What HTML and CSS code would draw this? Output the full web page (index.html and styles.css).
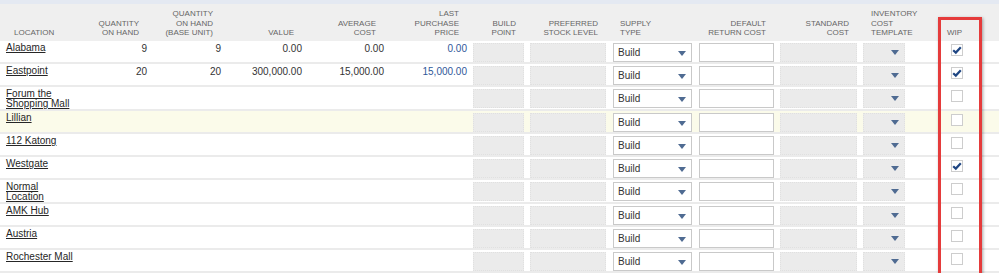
FILE: index.html
```html
<!DOCTYPE html>
<html>
<head>
    <title>Locations</title>
    <link rel="stylesheet" href="styles.css">
</head>
<body>
    <div class="strip"></div>
    <div class="sheet">
        <table class="grid">
            <colgroup>
                <col class="w-loc"><col class="w-qty"><col class="w-base"><col class="w-value">
                <col class="w-avg"><col class="w-last"><col class="w-build"><col class="w-pref">
                <col class="w-supply"><col class="w-ret"><col class="w-std"><col class="w-tmpl">
                <col class="w-wip"><col class="w-end">
            </colgroup>
            <thead>
                <tr>
                    <th class="first">LOCATION</th>
                    <th class="num">QUANTITY<br>ON HAND</th>
                    <th class="num">QUANTITY<br>ON HAND<br>(BASE UNIT)</th>
                    <th class="num">VALUE</th>
                    <th class="num">AVERAGE<br>COST</th>
                    <th class="num">LAST<br>PURCHASE<br>PRICE</th>
                    <th class="num">BUILD<br>POINT</th>
                    <th class="num">PREFERRED<br>STOCK LEVEL</th>
                    <th>SUPPLY<br>TYPE</th>
                    <th class="num">DEFAULT<br>RETURN COST</th>
                    <th class="num">STANDARD<br>COST</th>
                    <th>INVENTORY<br>COST<br>TEMPLATE</th>
                    <th class="wip">WIP</th>
                    <th></th>
                </tr>
            </thead>
            <tbody>
                <tr>
                    <td class="loc"><a href="#">Alabama</a></td>
                    <td class="num">9</td>
                    <td class="num">9</td>
                    <td class="num">0.00</td>
                    <td class="num">0.00</td>
                    <td class="num price">0.00</td>
                    <td><div class="locked"></div></td>
                    <td><div class="locked"></div></td>
                    <td><div class="select">Build<i class="arrow"></i></div></td>
                    <td><input class="field" type="text"></td>
                    <td><div class="locked"></div></td>
                    <td><div class="locked tmpl"><i class="arrow"></i></div></td>
                    <td class="wip"><span class="check on"><svg width="10" height="10" viewBox="0 0 10 10"><path d="M1.2 5.2 L3.8 7.6 L8.8 2.2" fill="none" stroke="#1f4683" stroke-width="2.2"/></svg></span></td>
                    <td></td>
                </tr>
                <tr>
                    <td class="loc"><a href="#">Eastpoint</a></td>
                    <td class="num">20</td>
                    <td class="num">20</td>
                    <td class="num">300,000.00</td>
                    <td class="num">15,000.00</td>
                    <td class="num price">15,000.00</td>
                    <td><div class="locked"></div></td>
                    <td><div class="locked"></div></td>
                    <td><div class="select">Build<i class="arrow"></i></div></td>
                    <td><input class="field" type="text"></td>
                    <td><div class="locked"></div></td>
                    <td><div class="locked tmpl"><i class="arrow"></i></div></td>
                    <td class="wip"><span class="check on"><svg width="10" height="10" viewBox="0 0 10 10"><path d="M1.2 5.2 L3.8 7.6 L8.8 2.2" fill="none" stroke="#1f4683" stroke-width="2.2"/></svg></span></td>
                    <td></td>
                </tr>
                <tr>
                    <td class="loc"><a href="#">Forum the Shopping Mall</a></td>
                    <td></td><td></td><td></td><td></td><td></td>
                    <td><div class="locked"></div></td>
                    <td><div class="locked"></div></td>
                    <td><div class="select">Build<i class="arrow"></i></div></td>
                    <td><input class="field" type="text"></td>
                    <td><div class="locked"></div></td>
                    <td><div class="locked tmpl"><i class="arrow"></i></div></td>
                    <td class="wip"><span class="check"></span></td>
                    <td></td>
                </tr>
                <tr class="hover">
                    <td class="loc"><a href="#">Lillian</a></td>
                    <td></td><td></td><td></td><td></td><td></td>
                    <td><div class="locked"></div></td>
                    <td><div class="locked"></div></td>
                    <td><div class="select">Build<i class="arrow"></i></div></td>
                    <td><input class="field" type="text"></td>
                    <td><div class="locked"></div></td>
                    <td><div class="locked tmpl"><i class="arrow"></i></div></td>
                    <td class="wip"><span class="check"></span></td>
                    <td></td>
                </tr>
                <tr>
                    <td class="loc"><a href="#">112 Katong</a></td>
                    <td></td><td></td><td></td><td></td><td></td>
                    <td><div class="locked"></div></td>
                    <td><div class="locked"></div></td>
                    <td><div class="select">Build<i class="arrow"></i></div></td>
                    <td><input class="field" type="text"></td>
                    <td><div class="locked"></div></td>
                    <td><div class="locked tmpl"><i class="arrow"></i></div></td>
                    <td class="wip"><span class="check"></span></td>
                    <td></td>
                </tr>
                <tr>
                    <td class="loc"><a href="#">Westgate</a></td>
                    <td></td><td></td><td></td><td></td><td></td>
                    <td><div class="locked"></div></td>
                    <td><div class="locked"></div></td>
                    <td><div class="select">Build<i class="arrow"></i></div></td>
                    <td><input class="field" type="text"></td>
                    <td><div class="locked"></div></td>
                    <td><div class="locked tmpl"><i class="arrow"></i></div></td>
                    <td class="wip"><span class="check on"><svg width="10" height="10" viewBox="0 0 10 10"><path d="M1.2 5.2 L3.8 7.6 L8.8 2.2" fill="none" stroke="#1f4683" stroke-width="2.2"/></svg></span></td>
                    <td></td>
                </tr>
                <tr>
                    <td class="loc"><a href="#">Normal Location</a></td>
                    <td></td><td></td><td></td><td></td><td></td>
                    <td><div class="locked"></div></td>
                    <td><div class="locked"></div></td>
                    <td><div class="select">Build<i class="arrow"></i></div></td>
                    <td><input class="field" type="text"></td>
                    <td><div class="locked"></div></td>
                    <td><div class="locked tmpl"><i class="arrow"></i></div></td>
                    <td class="wip"><span class="check"></span></td>
                    <td></td>
                </tr>
                <tr>
                    <td class="loc"><a href="#">AMK Hub</a></td>
                    <td></td><td></td><td></td><td></td><td></td>
                    <td><div class="locked"></div></td>
                    <td><div class="locked"></div></td>
                    <td><div class="select">Build<i class="arrow"></i></div></td>
                    <td><input class="field" type="text"></td>
                    <td><div class="locked"></div></td>
                    <td><div class="locked tmpl"><i class="arrow"></i></div></td>
                    <td class="wip"><span class="check"></span></td>
                    <td></td>
                </tr>
                <tr>
                    <td class="loc"><a href="#">Austria</a></td>
                    <td></td><td></td><td></td><td></td><td></td>
                    <td><div class="locked"></div></td>
                    <td><div class="locked"></div></td>
                    <td><div class="select">Build<i class="arrow"></i></div></td>
                    <td><input class="field" type="text"></td>
                    <td><div class="locked"></div></td>
                    <td><div class="locked tmpl"><i class="arrow"></i></div></td>
                    <td class="wip"><span class="check"></span></td>
                    <td></td>
                </tr>
                <tr>
                    <td class="loc"><a href="#">Rochester Mall</a></td>
                    <td></td><td></td><td></td><td></td><td></td>
                    <td><div class="locked"></div></td>
                    <td><div class="locked"></div></td>
                    <td><div class="select">Build<i class="arrow"></i></div></td>
                    <td><input class="field" type="text"></td>
                    <td><div class="locked"></div></td>
                    <td><div class="locked tmpl"><i class="arrow"></i></div></td>
                    <td class="wip"><span class="check"></span></td>
                    <td></td>
                </tr>
            </tbody>
        </table>
        <div class="callout"></div>
    </div>
</body>
</html>
```

FILE: styles.css
```css
*
{
	margin: 0;
	padding: 0;
}
body
{
	background: #fff;
	font-family: "Liberation Sans", Arial, sans-serif;
	color: #333;
	overflow: hidden;
}
.strip
{
	height: 4px;
	background: #e4e9f2;
}
.sheet
{
	position: relative;
}

/* column widths */
.w-loc { width: 80px; }
.w-qty { width: 70px; }
.w-base { width: 74px; }
.w-value { width: 81px; }
.w-avg { width: 82px; }
.w-last { width: 83px; }
.w-build { width: 57px; }
.w-pref { width: 82px; }
.w-supply { width: 87px; }
.w-ret { width: 81px; }
.w-std { width: 83px; }
.w-tmpl { width: 79px; }
.w-wip { width: 43px; }
.w-end { width: 17px; }

.grid
{
	width: 999px;
	table-layout: fixed;
	border-collapse: collapse;
}
.grid th
{
	height: 33px;
	background: #efefef;
	color: #666;
	font-size: 8px;
	font-weight: normal;
	line-height: 9.2px;
	text-align: left;
	vertical-align: bottom;
	white-space: nowrap;
	padding: 0 11px 4px 11px;
}
.grid th.first
{
	padding-left: 14px;
}
.grid th.num
{
	text-align: right;
}
.grid th.wip
{
	padding-left: 8px;
}
.grid td
{
	font-size: 10px;
	line-height: 10px;
	vertical-align: top;
	padding: 2px 3px 0 3px;
	border-bottom: 2px solid #ebebeb;
	height: 19px;
}
.grid td.loc
{
	padding-left: 6px;
	padding-top: 2px;
	height: 19px;
}
.grid td.num
{
	text-align: right;
	padding-top: 3px;
	height: 18px;
}
.grid td.price
{
	color: #2f5899;
}
.grid tr.hover td
{
	background: #fbfbea;
}
.loc a
{
	color: #262626;
	text-decoration: underline;
}

.locked
{
	height: 19px;
	box-sizing: border-box;
	background: #ebebeb;
	border: 1px dotted #e0e0e0;
	position: relative;
}
.locked.tmpl
{
	width: 42px;
}
.select
{
	position: relative;
	height: 19px;
	box-sizing: border-box;
	margin: 0 1px;
	padding: 4px 0 0 4px;
	background: #fff;
	border: 1px solid #c9c9c9;
	color: #333;
	font-size: 10px;
	line-height: 10px;
}
.arrow
{
	position: absolute;
	right: 5px;
	top: 7px;
	width: 0;
	height: 0;
	border-left: 4.5px solid transparent;
	border-right: 4.5px solid transparent;
	border-top: 5px solid #4f6b92;
}
.locked .arrow
{
	top: 6px;
}
.field
{
	display: block;
	width: 100%;
	height: 19px;
	box-sizing: border-box;
	border: 1px solid #c9c9c9;
	background: #fff;
	outline: none;
}
.grid td.wip
{
	padding-left: 12px;
	padding-top: 3px;
	height: 18px;
}
.check
{
	display: block;
	width: 12px;
	height: 12px;
	box-sizing: border-box;
	border: 1px solid #cdcdcd;
	background: #fff;
}
.check svg
{
	display: block;
	margin: 0;
}

/* annotation box drawn over the WIP column */
.callout
{
	position: absolute;
	left: 938px;
	top: 13px;
	width: 44px;
	height: 270px;
	box-sizing: border-box;
	border: 3px solid #e53b3b;
	box-shadow: 1px 1px 3px rgba(0, 0, 0, 0.35);
	pointer-events: none;
}
```
